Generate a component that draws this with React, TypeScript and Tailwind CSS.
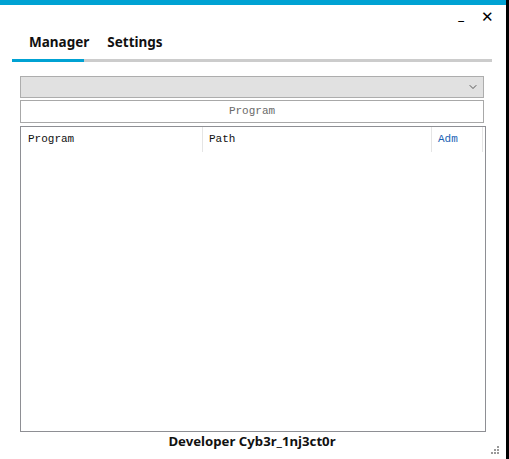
import { ChevronDown } from 'lucide-react';

const mono = { fontFamily: '"Liberation Mono", "DejaVu Sans Mono", monospace' };

function GripDots() {
  // little resize grip in the bottom right corner
  const dots = [
    [6, 0],
    [3, 3], [6, 3],
    [0, 6], [3, 6], [6, 6],
  ];
  return (
    <svg width="9" height="9" viewBox="0 0 9 9" className="absolute bottom-[4px] right-[6px]">
      {dots.map(([x, y], i) => (
        <rect key={i} x={x} y={y} width="2" height="2" fill="#9a9a9a" />
      ))}
    </svg>
  );
}

export default function App() {
  return (
    <div className="flex h-[459px] w-[509px] bg-black" style={{ fontFamily: '"Noto Sans", "Liberation Sans", sans-serif' }}>
      <div className="relative flex h-full w-[506px] flex-col bg-white">
        <div className="h-[5px] bg-[#00a2d3]" />

        {/* window buttons */}
        <div className="flex h-[20px] items-start justify-end gap-[17px] pr-[12px] pt-[2px] text-[14px] leading-none text-black">
          <span className="mt-[1px] font-bold">_</span>
          <span className="mt-[2px] text-[15px]">✕</span>
        </div>

        {/* tabs */}
        <div className="ml-[12px] mr-[14px] mt-[11px]">
          <div className="flex items-end gap-[18px] pl-[17px] text-[13.5px] font-bold leading-none text-[#111]">
            <span>Manager</span>
            <span>Settings</span>
          </div>
          <div className="mt-[9px] flex h-[3px]">
            <div className="w-[72px] bg-[#00a2d3]" />
            <div className="flex-1 bg-[#cccccc]" />
          </div>
        </div>

        <div className="ml-[20px] mr-[22px] mt-[14px] flex flex-1 flex-col">
          {/* combo */}
          <div className="flex h-[22px] items-center justify-end border border-[#adadad] bg-[#e1e1e1] pr-[4px]">
            <ChevronDown size={12} strokeWidth={1.6} className="text-[#333]" />
          </div>

          {/* button */}
          <div
            className="mt-[2px] flex h-[23px] items-center justify-center border border-[#a8a8a8] bg-white text-[11px] text-[#6a6a6a]"
            style={mono}
          >
            Program
          </div>

          {/* list view */}
          <div className="mr-[-2px] mt-[3px] flex h-[306px] flex-col border border-[#8e8f94] bg-white">
            <div className="flex h-[25px] text-[11px] text-[#111]" style={mono}>
              <div className="flex w-[182px] items-center border-r border-[#e5e5e5] pl-[7px]">Program</div>
              <div className="flex w-[229px] items-center border-r border-[#e5e5e5] pl-[6px]">Path</div>
              <div className="flex w-[51px] items-center border-r border-[#e5e5e5] pl-[6px] text-[#1a5fb4]">Adm</div>
            </div>
          </div>

          <div className="pt-[1px] text-center text-[13.2px] font-bold leading-[17px] text-[#111]">
            Developer Cyb3r_1nj3ct0r
          </div>
        </div>

        <GripDots />
      </div>
    </div>
  );
}
